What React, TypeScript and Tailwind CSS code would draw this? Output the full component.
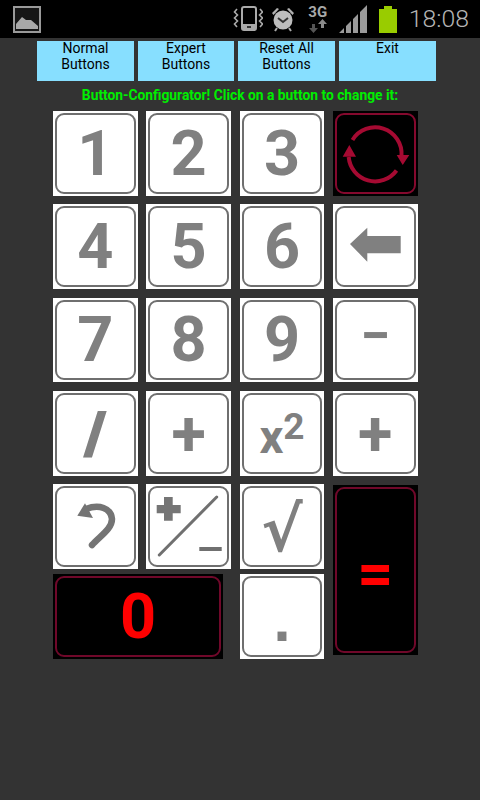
import React from "react";

const tile = "flex h-[84.67px] w-[84.67px] items-center justify-center bg-white p-[2px]";
const frame = "relative flex h-full w-full items-center justify-center rounded-[9px] border-2 border-[#6f6f6f] text-[#808080]";
const digit = "font-['Roboto',sans-serif] font-bold text-[63px] leading-none";

function Tile({ children }: { children: React.ReactNode }) {
  return (
    <div className={tile}>
      <div className={frame}>{children}</div>
    </div>
  );
}

function Digit({ v }: { v: string }) {
  return (
    <Tile>
      <span className={digit}>{v}</span>
    </Tile>
  );
}

function Icon({ children }: { children: React.ReactNode }) {
  return (
    <svg viewBox="0 0 85 85" className="absolute left-[-4px] top-[-4px] h-[85px] w-[85px]">
      {children}
    </svg>
  );
}

function NavButton({ lines, w }: { lines: string[]; w: string }) {
  return (
    <div className={`h-10 bg-[#87dfff] text-center font-['Roboto',sans-serif] text-[14px] leading-4 text-black ${w}`}>
      <div className="-translate-y-px">
        {lines.map((l) => (
          <div key={l}>{l}</div>
        ))}
      </div>
    </div>
  );
}

function StatusBar() {
  return (
    <div className="flex h-[38px] items-center justify-between bg-black pl-[13px] pr-[11px]">
      <svg viewBox="0 0 28 27" className="h-[27px] w-[28px]">
        <rect x="1" y="1" width="26" height="25" fill="#161616" stroke="#9a9a9a" strokeWidth="2" />
        <path d="M3 22 L3 18 L9 11 L13 14 L18 14 L25 20 L25 23 L3 23 Z" fill="#a8a8a8" />
      </svg>
      <div className="flex items-center">
        <svg viewBox="0 0 30 28" className="mr-[8px] h-[28px] w-[30px]">
          <rect x="9" y="2" width="14" height="23" rx="2" fill="none" stroke="#aaa" strokeWidth="2" />
          <rect x="9" y="19" width="14" height="6" fill="#aaa" />
          <rect x="14" y="21" width="4" height="2" fill="#333" />
          <path d="M4 4 L1.5 7 L4.5 10 L1.5 13 L4.5 16 L1.5 19 L4 22" fill="none" stroke="#aaa" strokeWidth="1.6" />
          <path d="M27 4 L29.5 7 L26.5 10 L29.5 13 L26.5 16 L29.5 19 L27 22" fill="none" stroke="#aaa" strokeWidth="1.6" />
        </svg>
        <svg viewBox="0 0 24 26" className="mr-[12px] h-[26px] w-[24px]">
          <circle cx="12" cy="14" r="9.5" fill="#bdbdbd" />
          <path d="M1 7 L6 2 L8 3 L2.5 9 Z M23 7 L18 2 L16 3 L21.5 9 Z" fill="#b0b0b0" />
          <path d="M7 12 L12 16 L17 12" fill="none" stroke="#333" strokeWidth="2" />
          <path d="M6 22 L4 25 M18 22 L20 25" stroke="#aaa" strokeWidth="2" />
        </svg>
        <div className="mr-[10px] flex w-[22px] flex-col items-center">
          <span className="font-['Roboto',sans-serif] text-[15px] font-bold leading-[13px] text-[#a8a8a8]">3G</span>
          <svg viewBox="0 0 18 14" className="h-[14px] w-[18px]">
            <path d="M3 5 H6 V9 H9 L4.5 14 L0 9 H3 Z" fill="#555" />
            <path d="M12 9 H15 V5 H18 L13.5 0 L9 5 H12 Z" fill="#8a8a8a" />
          </svg>
        </div>
        <svg viewBox="0 0 28 28" className="mr-[12px] h-[28px] w-[28px]">
          <path d="M0 28 L5 23 V28 Z M7 21 L12 16 V28 H7 Z M14 14 L19 9 V28 H14 Z M21 7 L28 0 V28 H21 Z" fill="#9a9a9a" />
        </svg>
        <svg viewBox="0 0 18 27" className="mr-[12px] h-[27px] w-[18px]">
          <rect x="5" y="0" width="8" height="4" fill="#99cc00" />
          <rect x="0" y="3" width="18" height="24" fill="#99cc00" />
        </svg>
        <span className="font-['Roboto',sans-serif] text-[24.8px] font-light leading-none text-[#b4b4b4]">18:08</span>
      </div>
    </div>
  );
}

export default function App() {
  return (
    <div className="h-[800px] w-[480px] overflow-hidden bg-[#333333]">
      <StatusBar />
      <div className="ml-[37px] mt-[3px] flex gap-[4px]">
        <NavButton w="w-[97px]" lines={["Normal", "Buttons"]} />
        <NavButton w="w-[96px]" lines={["Expert", "Buttons"]} />
        <NavButton w="w-[97px]" lines={["Reset All", "Buttons"]} />
        <NavButton w="w-[97px]" lines={["Exit"]} />
      </div>
      <div className="mt-[6px] h-[16px] text-center font-['Roboto',sans-serif] text-[13.8px] font-bold leading-4 text-[#00ee00]">
        Button-Configurator! Click on a button to change it:
      </div>
      <div className="ml-[53px] mt-[8px] flex flex-col gap-[8.67px]">
        <div className="grid grid-cols-[repeat(4,84.67px)] gap-[8.67px]">
          <Digit v="1" />
          <Digit v="2" />
          <Digit v="3" />
          <div className="relative h-[84.67px] w-[84.67px] bg-black p-[2px]">
            <div className="h-full w-full rounded-[9px] border-2 border-[#85092e]" />
            <svg viewBox="0 0 85 85" className="absolute left-0 top-0 h-[85px] w-[85px]">
              <path d="M19.5 29 A26.5 26.5 0 0 1 68.5 45" fill="none" stroke="#a50a32" strokeWidth="4" />
              <path d="M63.5 59.5 A26.5 26.5 0 0 1 15.7 46" fill="none" stroke="#a50a32" strokeWidth="4" />
              <path d="M63.7 44 H76.3 L69.7 54 Z M16.3 34 L23 45.7 H9.7 Z" fill="#a50a32" />
            </svg>
          </div>
          <Digit v="4" />
          <Digit v="5" />
          <Digit v="6" />
          <Tile>
            <Icon>
              <path d="M17 40 L34.3 23.7 V32 H67.7 V49.3 H34.3 V57.7 Z" fill="#808080" />
            </Icon>
          </Tile>
          <Digit v="7" />
          <Digit v="8" />
          <Digit v="9" />
          <Tile>
            <span className="-translate-y-[4px] font-['Roboto',sans-serif] text-[54px] font-bold leading-none">−</span>
          </Tile>
          <Tile>
            <span className="font-['Roboto',sans-serif] text-[58px] font-black leading-none [-webkit-text-stroke:2px_#808080]">/</span>
          </Tile>
          <Tile>
            <span className={digit}>+</span>
          </Tile>
          <Tile>
            <span className="flex items-start font-['Roboto',sans-serif] font-bold leading-none">
              <span className="mt-[7px] text-[47px] leading-none">x</span>
              <span className="mt-[2px] text-[37px] leading-none">2</span>
            </span>
          </Tile>
          <Tile>
            <span className={digit}>+</span>
          </Tile>
        </div>
        <div className="grid grid-cols-[repeat(4,84.67px)] grid-rows-[84.67px_85px] gap-x-[8.67px] gap-y-[5px]">
          <Tile>
            <Icon>
              <path d="M33 25 C46 20 58 24 59 35 C59 45 47 52 39 61" fill="none" stroke="#747474" strokeWidth="6.5" strokeLinecap="round" />
              <path d="M24.3 31.7 L32 19.3 L40 34 Z" fill="#747474" />
            </Icon>
          </Tile>
          <Tile>
            <Icon>
              <path d="M10.7 21 H18 V13 H26.7 V21 H34.7 V29.3 H26.7 V36.7 H18 V29.3 H10.7 Z" fill="#757575" />
              <path d="M13.3 71 L70.7 13" stroke="#707070" strokeWidth="3" strokeLinecap="round" />
              <rect x="53.3" y="63" width="22.4" height="4" fill="#707070" />
            </Icon>
          </Tile>
          <Tile>
            <span className="translate-y-[3px] font-['DejaVu_Sans',sans-serif] text-[62px] font-bold leading-none">√</span>
          </Tile>
          <div className="row-span-2 mt-[1px] h-[170px] w-[84.67px] bg-black p-[2px]">
            <div className="flex h-full w-full items-center justify-center rounded-[9px] border-2 border-[#70082a] font-['Roboto',sans-serif] text-[63px] font-bold leading-none text-[#ff0000]">
              <span className="translate-y-[3px]">=</span>
            </div>
          </div>
          <div className="col-span-2 h-[85px] w-[170px] bg-black p-[2px]">
            <div className="flex h-full w-full items-center justify-center rounded-[9px] border-2 border-[#70082a] font-['Roboto',sans-serif] text-[63px] font-bold leading-none text-[#ff0000]">
              0
            </div>
          </div>
          <Tile>
            <span className="translate-y-[3px] font-['Liberation_Sans',sans-serif] text-[63px] font-bold leading-none">.</span>
          </Tile>
        </div>
      </div>
    </div>
  );
}
